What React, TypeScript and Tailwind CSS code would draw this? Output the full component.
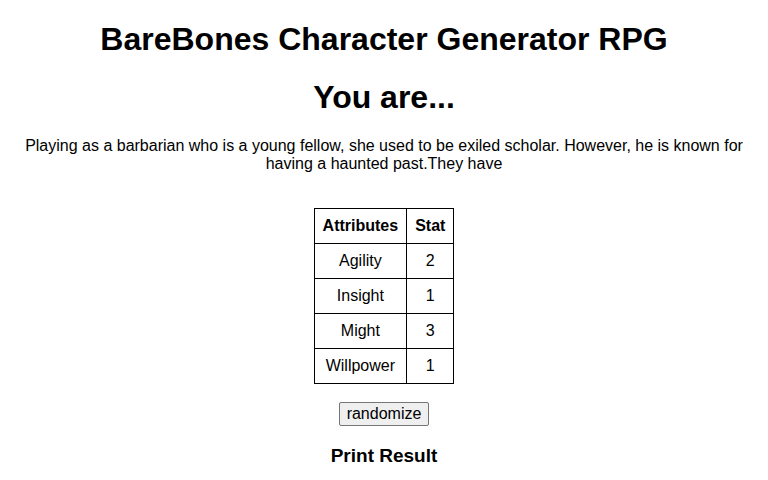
import { useState } from "react";

const STATS = [
  { name: "Agility", value: 2 },
  { name: "Insight", value: 1 },
  { name: "Might", value: 3 },
  { name: "Willpower", value: 1 },
];

export default function App() {
  const [stats, setStats] = useState(STATS);

  const randomize = () => {
    setStats((prev) =>
      prev.map((s) => ({ ...s, value: 1 + Math.floor(Math.random() * 3) })),
    );
  };

  return (
    <div className="min-h-screen bg-white text-center font-['Liberation_Sans',Arial,sans-serif] text-base text-black">
      <h1 className="pt-[21px] text-[32px] leading-[37px] font-bold">
        BareBones Character Generator RPG
      </h1>
      <h1 className="mt-[21px] text-[32px] leading-[37px] font-bold">
        You are...
      </h1>
      <p className="mx-2 mt-[21px] leading-[18px]">
        Playing as a barbarian who is a young fellow, she used to be exiled
        scholar. However, he is known for having a haunted past.They have
      </p>

      <table className="mx-auto mt-[35px] border-collapse">
        <thead>
          <tr>
            <th className="border border-black px-2 py-2 leading-[18px] font-bold">
              Attributes
            </th>
            <th className="border border-black px-2 py-2 leading-[18px] font-bold">
              Stat
            </th>
          </tr>
        </thead>
        <tbody>
          {stats.map((s) => (
            <tr key={s.name}>
              <td className="border border-black px-2 py-2 leading-[18px]">
                {s.name}
              </td>
              <td className="border border-black px-2 py-2 leading-[18px]">
                {s.value}
              </td>
            </tr>
          ))}
        </tbody>
      </table>

      <div className="mt-[18px]">
        <button
          onClick={randomize}
          className="rounded-[2px] border border-[#767676] bg-[#efefef] px-[7px] py-[1px] leading-[20px]"
        >
          randomize
        </button>
      </div>

      <h3 className="mt-[19px] text-[19px] leading-[22px] font-bold">
        Print Result
      </h3>
    </div>
  );
}
